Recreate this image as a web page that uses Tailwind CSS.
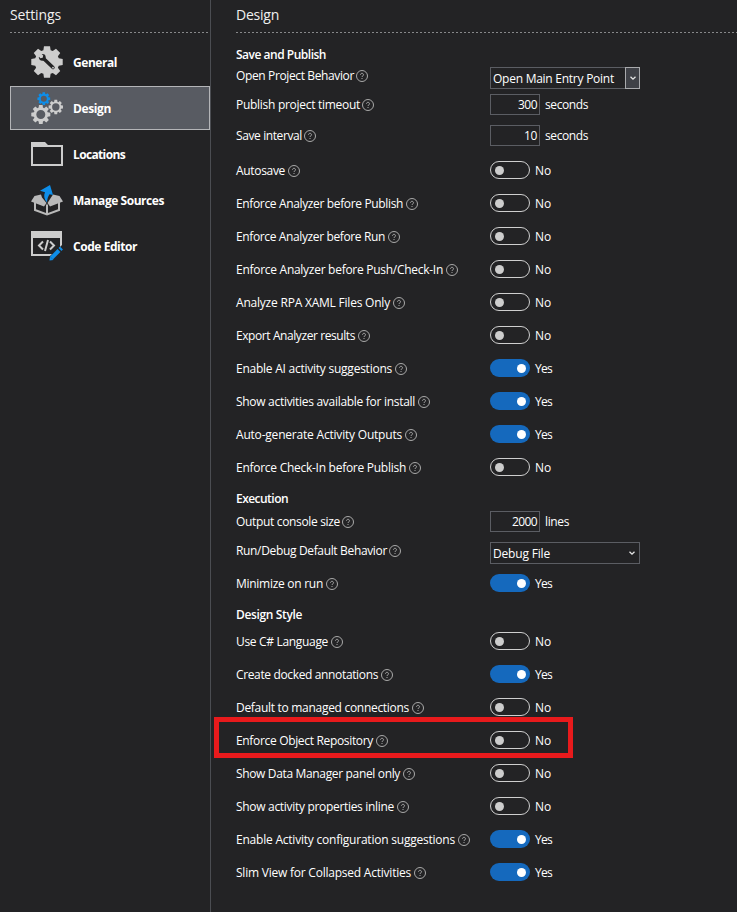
<!DOCTYPE html>
<html lang="en">
<head>
  <meta charset="utf-8">
  <meta name="viewport" content="width=device-width, initial-scale=1">
  <title>Settings</title>
  <script src="https://cdn.jsdelivr.net/npm/@tailwindcss/browser@4"></script>
</head>
<body class="bg-[#232325] text-white font-['Open_Sans','Noto_Sans',sans-serif] text-[12px] leading-4 h-[912px] w-[737px] overflow-hidden flex">

  <aside class="w-[211px] shrink-0 border-r border-[#4b4d52] pl-2.5">
    <h1 class="h-8 pt-[5px] text-sm leading-5 text-[#f0f0f0]"><span data-w="51">Settings</span></h1>
    <div class="h-px bg-[repeating-linear-gradient(90deg,#87888a_0_2px,transparent_2px_4px)]"></div>
    <nav class="mt-[7px] flex flex-col gap-0.5 w-[200px] font-bold text-xs">
      <a class="h-11 flex items-center gap-2.5 pl-[21px]">
        <svg class="size-8 shrink-0" viewBox="0 0 32 32">
          <path data-gear="16,16,16,12.3,0" fill="#cdcdcd"/>
          <path d="M11.500 11.500l10.500 10" stroke="#232325" stroke-width="3.400" stroke-linecap="round"/>
          <circle cx="11.300" cy="11.300" r="3.400" fill="#232325"/>
          <path d="M6.500 9.200l2.700-2.700 3 3-.5 2.300-2.300.4z" fill="#cdcdcd"/>
          <circle cx="22" cy="21.700" r=".9" fill="#cdcdcd"/>
        </svg>
        <span class="pt-0.5" data-w="44">General</span>
      </a>
      <a class="h-11 flex items-center gap-2.5 pl-5 bg-[#585b62] border border-[#b4b5b8]">
        <svg class="size-8 shrink-0" viewBox="0 0 32 32" fill-rule="evenodd">
          <path data-gear="12.800,6.700,6.500,4.900,3" fill="#0e8ee9"/>
          <path data-gear="24.800,15,7.300,5.500,3.700" fill="#cdcdcd"/>
          <path data-gear="9.800,22.500,9.700,7.200,4.500" fill="#cdcdcd"/>
        </svg>
        <span class="pt-0.5" data-w="38">Design</span>
      </a>
      <a class="h-11 flex items-center gap-2.5 pl-[21px]">
        <svg class="size-8 shrink-0" viewBox="0 0 32 32">
          <path fill="#cdcdcd" fill-rule="evenodd" d="M0 4h14l3 3h15v21H0zM2 9v17h28V9z"/>
        </svg>
        <span class="pt-0.5" data-w="52">Locations</span>
      </a>
      <a class="h-11 flex items-center gap-2.5 pl-[21px]">
        <svg class="size-8 shrink-0" viewBox="0 0 32 32">
          <path d="M4 16v10l12 4.500L28 26V16M16 20.500v10" fill="none" stroke="#b9b9b9" stroke-width="2"/>
          <path d="M3.500 12l6.500-1.500 1 3 4.500 5.500-2.500 3.500-13-5zM28.500 12l-6.500-1.500-2 3-3.500 5.500 2.500 3.500 13-5z" fill="#b9b9b9"/>
          <path d="M19 1l3 10-3.500-.8c-1.500 2-2.200 4.800-2.500 8.300-3-3.500-3.500-7-2-10.300L9 6.800z" fill="#0e8ee9"/>
        </svg>
        <span class="pt-0.5" data-w="91">Manage Sources</span>
      </a>
      <a class="h-11 flex items-center gap-2.5 pl-[21px]">
        <svg class="size-8 shrink-0" viewBox="0 0 32 32" fill="none">
          <path fill="#cdcdcd" fill-rule="evenodd" d="M0 1h31v14l-2 2V8H2v16h19l-2 2H0z"/>
          <path d="M12 11.500l-4 4 4 4M19 11.500l4 4-4 4M17 10l-3 11" stroke="#cdcdcd" stroke-width="2"/>
          <path d="M20.500 28L28 20.500" stroke="#0e8ee9" stroke-width="4"/>
          <path d="M18.500 30.500l.5-4 3.500 3.500z" fill="#0e8ee9"/>
          <path d="M29 19.500l1.500-1.500" stroke="#0e8ee9" stroke-width="4"/>
        </svg>
        <span class="pt-0.5" data-w="64">Code Editor</span>
      </a>
    </nav>
  </aside>

  <main class="flex-1 relative pl-[25px]">
    <h2 class="h-8 pt-[5px] text-sm leading-5 text-[#f0f0f0]"><span data-w="43">Design</span></h2>
    <div class="h-px bg-[repeating-linear-gradient(90deg,#87888a_0_2px,transparent_2px_4px)]"></div>

    <h3 class="mt-[11px] h-[23px] leading-[22px] font-semibold"><span data-w="90">Save and Publish</span></h3>
    <div class="flex flex-col">
      <div class="h-[22px] flex items-center">
        <div class="w-[254px] flex items-center gap-0.5 pb-1" data-label="Open Project Behavior" data-fit="118"></div>
        <div class="w-[150px] h-[22px] border border-[#5b5d63] flex items-center justify-between">
          <span class="pl-0.5 pt-0.5" data-w="121">Open Main Entry Point</span>
          <span class="-my-px -mr-px h-[22px] w-[15px] border border-[#a9aaad] bg-[#3f4147] flex items-center justify-center">
            <svg class="size-2" viewBox="0 0 8 8" fill="none" stroke="#e6e6e6" stroke-width="1.300"><path d="M1.500 2.700L4 5.200l2.500-2.500"/></svg>
          </span>
        </div>
      </div>
      <div class="mt-[5px] h-[21px] flex items-center">
        <div class="w-[254px] flex items-center gap-0.5" data-label="Publish project timeout" data-fit="124"></div>
        <div class="w-[50px] h-[21px] border border-[#5b5d63] leading-5 text-right pr-0.5"><span data-w="19">300</span></div>
        <span class="ml-[5px]" data-w="43">seconds</span>
      </div>
      <div class="mt-2.5 h-[21px] flex items-center">
        <div class="w-[254px] flex items-center gap-0.5" data-label="Save interval" data-fit="66"></div>
        <div class="w-[50px] h-[21px] border border-[#5b5d63] leading-5 text-right pr-0.5"><span data-w="13">10</span></div>
        <span class="ml-[5px]" data-w="43">seconds</span>
      </div>
    </div>
    <div id="save" class="mt-[15px] flex flex-col gap-[15px]"></div>

    <h3 class="mt-3 h-[23px] leading-[22px] font-semibold"><span data-w="52">Execution</span></h3>
    <div class="h-[21px] flex items-center">
      <div class="w-[254px] flex items-center gap-0.5" data-label="Output console size" data-fit="104"></div>
      <div class="w-[50px] h-[21px] border border-[#5b5d63] leading-5 text-right pr-0.5"><span data-w="25">2000</span></div>
      <span class="ml-[5px]" data-w="24">lines</span>
    </div>
    <div class="mt-2.5 h-[22px] flex items-center">
      <div class="w-[254px] flex items-center gap-0.5 pb-1" data-label="Run/Debug Default Behavior" data-fit="151"></div>
      <div class="w-[150px] h-[22px] border border-[#5b5d63] flex items-center justify-between pr-[3px]">
        <span class="pl-0.5 pt-0.5" data-w="57">Debug File</span>
        <svg class="size-2" viewBox="0 0 8 8" fill="none" stroke="#e6e6e6" stroke-width="1.300"><path d="M1.500 2.700L4 5.200l2.500-2.500"/></svg>
      </div>
    </div>
    <div id="execution" class="mt-2.5 flex flex-col gap-[15px]"></div>

    <h3 class="mt-3 h-[22px] leading-[22px] font-semibold"><span data-w="66">Design Style</span></h3>
    <div id="style" class="mt-1.5 flex flex-col gap-[15px]"></div>

    <!-- highlight around "Enforce Object Repository" -->
    <div class="absolute left-[3px] top-[717px] w-[359px] h-[41px] border-5 border-[#e81a1c]"></div>
  </main>

<script>
  // [label, label width, on]
  const toggles = {
    save: [
      ['Autosave', 49, 0],
      ['Enforce Analyzer before Publish', 167, 0],
      ['Enforce Analyzer before Run', 149, 0],
      ['Enforce Analyzer before Push/Check-In', 207, 0],
      ['Analyze RPA XAML Files Only', 154, 0],
      ['Export Analyzer results', 119, 0],
      ['Enable AI activity suggestions', 156, 1],
      ['Show activities available for install', 179, 1],
      ['Auto-generate Activity Outputs', 166, 1],
      ['Enforce Check-In before Publish', 170, 0]
    ],
    execution: [['Minimize on run', 87, 1]],
    style: [
      ['Use C# Language', 92, 0],
      ['Create docked annotations', 142, 1],
      ['Default to managed connections', 173, 0],
      ['Enforce Object Repository', 137, 0],
      ['Show Data Manager panel only', 164, 0],
      ['Show activity properties inline', 158, 0],
      ['Enable Activity configuration suggestions', 219, 1],
      ['Slim View for Collapsed Activities', 175, 1]
    ]
  };

  const qsa = sel => document.querySelectorAll(sel);
  const help = `<svg class="size-3 shrink-0" viewBox="0 0 12 12" fill="none" stroke="#a9a9a9">
    <circle cx="6" cy="6" r="5.500"/><path d="M4.500 4.800c0-2 3-2 3 0 0 1.200-1.500 1-1.500 2.200M6 8v1"/></svg>`;
  const label = (text, w) => `<span data-w="${w}">${text}</span>${help}`;

  const on = '<span class="w-10 h-[18px] rounded-full bg-[#1569bd] flex items-center justify-end pr-1"><i class="size-[9px] rounded-full bg-white"></i></span>';
  const off = '<span class="w-10 h-[18px] rounded-full border border-[#cfcfcf] flex items-center pl-1"><i class="size-[9px] rounded-full bg-[#cdcdcd]"></i></span>';

  for (const id in toggles) {
    document.getElementById(id).innerHTML = toggles[id].map(([text, w, yes]) => `
      <div class="h-[18px] flex items-center">
        <div class="w-[254px] flex items-center gap-[3px] pt-0.5">${label(text, w)}</div>
        ${yes ? on : off}
        <span class="ml-[5px] pt-0.5" data-w="${yes ? 17 : 16}">${yes ? 'Yes' : 'No'}</span>
      </div>`).join('');
  }
  qsa('[data-label]').forEach(el => { el.innerHTML = label(el.dataset.label, el.dataset.fit); });

  // gear outline: cx, cy, outer radius, root radius, hole radius
  qsa('[data-gear]').forEach(el => {
    const [cx, cy, ro, ri, hole] = el.dataset.gear.split(',').map(Number);
    const pts = [];
    for (let i = 0; i < 8; i++) {
      [[-.3, ri], [-.19, ro], [.19, ro], [.3, ri]].forEach(([off, r]) => {
        const a = i * Math.PI / 4 + off;
        pts.push((cx + r * Math.cos(a)).toFixed(2) + ' ' + (cy + r * Math.sin(a)).toFixed(2));
      });
    }
    let d = 'M' + pts.join('L') + 'z';
    if (hole) d += `M${cx - hole} ${cy}a${hole} ${hole} 0 1 0 ${hole * 2} 0a${hole} ${hole} 0 1 0 ${-hole * 2} 0z`;
    el.setAttribute('d', d);
  });

  // space the letters so each text takes its given width
  function fitText() {
    qsa('[data-w]').forEach(el => {
      el.style.whiteSpace = 'nowrap';
      el.style.letterSpacing = '0px';
      const range = document.createRange();
      range.selectNodeContents(el);
      const diff = el.dataset.w - range.getBoundingClientRect().width;
      el.style.letterSpacing = diff / el.textContent.length + 'px';
    });
  }
  window.addEventListener('load', () => document.fonts.ready.then(fitText));
</script>
</body>
</html>
